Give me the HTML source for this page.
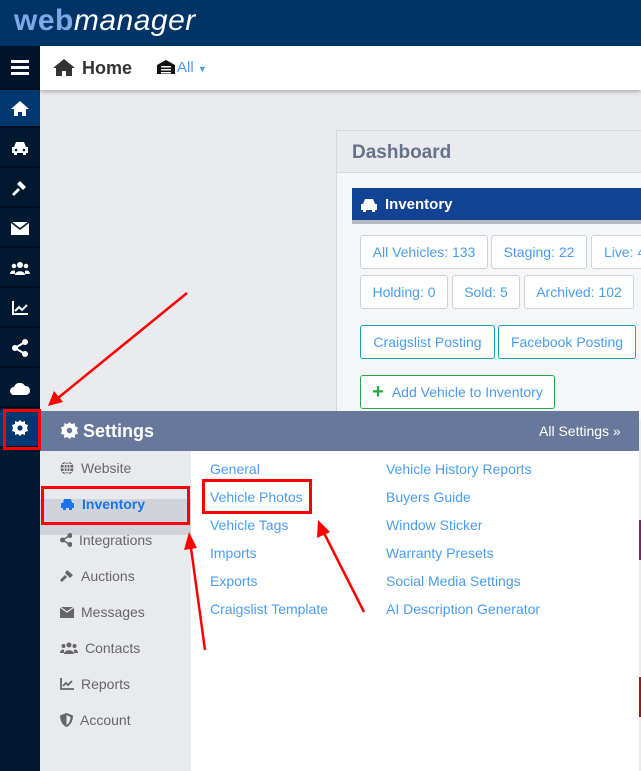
<!DOCTYPE html>
<html><head><style>
*{margin:0;padding:0;box-sizing:border-box}
body{width:641px;height:771px;overflow:hidden;background:#e9ebee;font-family:"Liberation Sans",sans-serif;position:relative}
.abs{position:absolute}
.top{left:0;top:0;width:641px;height:46px;background:#003366}
.logo{left:14px;top:4px;font-size:30px;color:#fff;font-style:italic;letter-spacing:0.5px}
.logo b{color:#7fa8e8;font-style:normal}
.side{left:0;top:46px;width:40px;height:725px;background:#001830}
.nav{left:40px;top:46px;width:601px;height:44px;background:#fff;box-shadow:0 2px 4px rgba(0,0,0,.25)}
.si{position:absolute;left:0;width:40px;height:38px;border-bottom:2px solid #000d1a;display:flex;align-items:center;justify-content:center}
.dash{left:336px;top:130px;width:305px;height:290px;background:#f5f6f8;border-left:1px solid #d5d8dc;border-top:1px solid #d5d8dc}
.btn{position:absolute;height:34px;border:1px solid #cfd3d8;border-radius:3px;background:#fff;color:#4a9cf0;font-size:14px;display:flex;align-items:center;justify-content:center;white-space:nowrap;overflow:hidden}
.panel{left:40px;top:411px;width:599px;height:360px;background:#fff}
.ph{position:absolute;left:0;top:0;width:599px;height:40px;background:#67789a;color:#fff}
.lc{position:absolute;left:0;top:40px;width:151px;height:320px;background:#e8eaed}
.li{position:absolute;left:20px;font-size:14px;color:#666;display:flex;align-items:center;gap:7px}
.lk{position:absolute;font-size:14px;color:#4a9cf0}
</style></head><body>
<div class="abs top"></div>
<div class="abs logo"><b>web</b>manager</div>
<div class="abs side">
 <div class="si" style="top:0;height:44px;background:#00152b"><svg width="18" height="16"><rect y="1" width="18" height="3" fill="#fff"/><rect y="7" width="18" height="3" fill="#fff"/><rect y="13" width="18" height="3" fill="#fff"/></svg></div>
 <div class="si" style="top:44px;background:#00386f"><svg width="18" height="16" viewBox="0 0 18 16"><path d="M9 1L0 9h3v7h4v-4h4v4h4V9h3z" fill="#fff"/></svg></div>
 <div class="si" style="top:84px"><svg width="18" height="14"><path d="M3 6L5 1h8l2 5h2v6h-2v2h-3v-2H6v2H3v-2H1V6z" fill="#fff"/><circle cx="5" cy="9" r="1.3" fill="#001830"/><circle cx="13" cy="9" r="1.3" fill="#001830"/></svg></div>
 <div class="si" style="top:124px"><svg width="16" height="16"><path d="M8 1l6 6-3 3-6-6zM6 8l2 2-6 6-2-2z" fill="#fff"/></svg></div>
 <div class="si" style="top:164px"><svg width="18" height="13"><rect width="18" height="13" fill="#fff"/><path d="M0 0l9 7 9-7" stroke="#001830" stroke-width="1.5" fill="none"/></svg></div>
 <div class="si" style="top:204px"><svg width="20" height="14"><circle cx="10" cy="4" r="3" fill="#fff"/><circle cx="4" cy="5" r="2.3" fill="#fff"/><circle cx="16" cy="5" r="2.3" fill="#fff"/><path d="M5 14c0-5 10-5 10 0zM0 13c0-4 5-4 5-3v3zM20 13c0-4-5-4-5-3v3z" fill="#fff"/></svg></div>
 <div class="si" style="top:244px"><svg width="16" height="14"><path d="M1 0v13h15" stroke="#fff" stroke-width="2" fill="none"/><path d="M3 10l4-4 3 3 5-5" stroke="#fff" stroke-width="2" fill="none"/></svg></div>
 <div class="si" style="top:284px"><svg width="16" height="18"><circle cx="13" cy="3" r="3" fill="#fff"/><circle cx="3" cy="9" r="3" fill="#fff"/><circle cx="13" cy="15" r="3" fill="#fff"/><path d="M13 3L3 9l10 6" stroke="#fff" stroke-width="2" fill="none"/></svg></div>
 <div class="si" style="top:324px"><svg width="20" height="14"><path d="M4 14a4 4 0 010-8 6 6 0 0111-1 4.5 4.5 0 011 9z" fill="#fff"/></svg></div>
 <div class="si" style="top:364px;background:#00386f"><svg width="16" height="16" viewBox="0 0 16 16"><path d="M8 0l2 2 3-1 0 3 3 1-1 3 1 3-3 1 0 3-3-1-2 2-2-2-3 1 0-3-3-1 1-3-1-3 3-1 0-3 3 1z" fill="#fff"/><circle cx="8" cy="8" r="2.6" fill="#00386f"/></svg></div>
</div>
<div class="abs nav">
 <svg class="abs" style="left:13px;top:12px" width="22" height="18" viewBox="0 0 22 18"><path d="M11 1L0 10h3v8h6v-5h4v5h6v-8h3z" fill="#333"/></svg>
 <div class="abs" style="left:42px;top:12px;font-size:18px;font-weight:bold;color:#333">Home</div>
 <svg class="abs" style="left:117px;top:14px" width="18" height="14"><path d="M0 14V5l9-5 9 5v9z" fill="#111"/><rect x="4" y="6" width="10" height="1.5" fill="#fff"/><rect x="4" y="9" width="10" height="1.5" fill="#fff"/><rect x="4" y="12" width="10" height="1.5" fill="#fff"/></svg>
 <div class="abs" style="left:137px;top:13px;font-size:15px;color:#4a9cf0">All <span style="font-size:9px">▼</span></div>
</div>
<div class="abs dash">
 <div class="abs" style="left:0;top:0;width:305px;height:42px;background:#e9ebee;border-bottom:1px solid #d5d8dc"></div>
 <div class="abs" style="left:15px;top:11px;font-size:19px;font-weight:bold;color:#66728a">Dashboard</div>
 <div class="abs" style="left:15px;top:57px;width:290px;height:36px;background:#124294;border-bottom:4px solid #b4b9c0"></div>
 <svg class="abs" style="left:23px;top:67px" width="18" height="14"><path d="M3 6L5 1h8l2 5h2v6h-2v2h-3v-2H6v2H3v-2H1V6z" fill="#fff"/></svg>
 <div class="abs" style="left:48px;top:65px;font-size:15px;font-weight:bold;color:#fff">Inventory</div>
 <div class="btn" style="left:23px;top:104px;width:128px">All Vehicles: 133</div>
 <div class="btn" style="left:154px;top:104px;width:96px">Staging: 22</div>
 <div class="btn" style="left:254px;top:104px;width:60px;justify-content:flex-start;padding-left:12px">Live: 4</div>
 <div class="btn" style="left:23px;top:144px;width:88px">Holding: 0</div>
 <div class="btn" style="left:115px;top:144px;width:68px">Sold: 5</div>
 <div class="btn" style="left:187px;top:144px;width:110px">Archived: 102</div>
 <div class="btn" style="left:23px;top:194px;width:135px;border-color:#17a2b8">Craigslist Posting</div>
 <div class="btn" style="left:161px;top:194px;width:138px;border-color:#17a2b8">Facebook Posting</div>
 <div class="btn" style="left:23px;top:244px;width:195px;border-color:#28a745"><span style="color:#28a745;font-size:20px;font-weight:bold;margin-right:8px">+</span>Add Vehicle to Inventory</div>
</div>
<div class="abs" style="left:639px;top:520px;width:2px;height:40px;background:#8b1a7a"></div>
<div class="abs" style="left:639px;top:677px;width:2px;height:40px;background:#b01010"></div>
<div class="abs panel">
 <div class="ph">
  <svg class="abs" style="left:21px;top:11px" width="17" height="17" viewBox="0 0 16 16"><path d="M8 0l2 2 3-1 0 3 3 1-1 3 1 3-3 1 0 3-3-1-2 2-2-2-3 1 0-3-3-1 1-3-1-3 3-1 0-3 3 1z" fill="#fff"/><circle cx="8" cy="8" r="2.6" fill="#67789a"/></svg>
  <div class="abs" style="left:43px;top:10px;font-size:18px;font-weight:bold">Settings</div>
  <div class="abs" style="left:499px;top:12px;font-size:14px">All Settings »</div>
 </div>
 <div class="lc">
  <div class="abs" style="left:0;top:48px;width:151px;height:36px;background:#d0d4da"></div>
  <div class="li" style="top:9px"><svg width="14" height="14" viewBox="0 0 14 14"><circle cx="7" cy="7" r="6.5" fill="#666"/><path d="M0.5 7h13M7 0.5v13M2 3.5h10M2 10.5h10" stroke="#e8eaed" stroke-width="1"/><ellipse cx="7" cy="7" rx="3" ry="6.5" fill="none" stroke="#e8eaed" stroke-width="1"/></svg>Website</div>
  <div class="li" style="top:45px;color:#1a73e8;font-weight:bold"><svg width="15" height="12"><path d="M3 5L4 1h7l1 4h2v5h-2v2H9v-2H6v2H3v-2H1V5z" fill="#1a73e8"/></svg>Inventory</div>
  <div class="li" style="top:81px"><svg width="12" height="14"><circle cx="10" cy="2.5" r="2.5" fill="#666"/><circle cx="2.5" cy="7" r="2.5" fill="#666"/><circle cx="10" cy="11.5" r="2.5" fill="#666"/><path d="M10 2.5L2.5 7 10 11.5" stroke="#666" stroke-width="1.6" fill="none"/></svg>Integrations</div>
  <div class="li" style="top:117px"><svg width="14" height="14"><path d="M7 1l6 5-3 3-5-5zM5 6l2 2-5 5-2-2z" fill="#666"/></svg>Auctions</div>
  <div class="li" style="top:153px"><svg width="14" height="11"><rect width="14" height="11" fill="#666"/><path d="M0 0l7 5 7-5" stroke="#e8eaed" stroke-width="1.2" fill="none"/></svg>Messages</div>
  <div class="li" style="top:189px"><svg width="18" height="12"><circle cx="9" cy="3" r="2.5" fill="#666"/><circle cx="3.5" cy="4" r="2" fill="#666"/><circle cx="14.5" cy="4" r="2" fill="#666"/><path d="M4 12c0-5 10-5 10 0zM0 11c0-4 4-4 4-3v3zM18 11c0-4-4-4-4-3v3z" fill="#666"/></svg> Contacts</div>
  <div class="li" style="top:225px"><svg width="14" height="12"><path d="M1 0v11h13" stroke="#666" stroke-width="1.8" fill="none"/><path d="M3 8l3-3 2 2 4-4" stroke="#666" stroke-width="1.8" fill="none"/></svg>Reports</div>
  <div class="li" style="top:261px"><svg width="13" height="14"><path d="M6.5 0L13 2.5c0 6-3 10-6.5 11.5C3 12.5 0 8.5 0 2.5z" fill="#666"/><path d="M6.5 2v10c2-1 4-4 4-8z" fill="#e8eaed"/></svg>Account</div>
 </div>
 <div class="lk" style="left:170px;top:50px">General</div>
 <div class="lk" style="left:170px;top:78px">Vehicle Photos</div>
 <div class="lk" style="left:170px;top:106px">Vehicle Tags</div>
 <div class="lk" style="left:170px;top:134px">Imports</div>
 <div class="lk" style="left:170px;top:162px">Exports</div>
 <div class="lk" style="left:170px;top:190px">Craigslist Template</div>
 <div class="lk" style="left:346px;top:50px">Vehicle History Reports</div>
 <div class="lk" style="left:346px;top:78px">Buyers Guide</div>
 <div class="lk" style="left:346px;top:106px">Window Sticker</div>
 <div class="lk" style="left:346px;top:134px">Warranty Presets</div>
 <div class="lk" style="left:346px;top:162px">Social Media Settings</div>
 <div class="lk" style="left:346px;top:190px">AI Description Generator</div>
</div>
<svg class="abs" style="left:0;top:0" width="641" height="771">
 <g fill="none" stroke="#f00" stroke-width="3">
  <rect x="4.5" y="410.5" width="35" height="38"/>
  <rect x="42.5" y="487.5" width="146" height="36"/>
  <rect x="203.5" y="480.5" width="107" height="32"/>
 </g>
 <g stroke="#f00" stroke-width="2.5">
  <line x1="187" y1="293" x2="58" y2="398"/>
  <line x1="205" y1="650" x2="191" y2="548"/>
  <line x1="364" y1="612" x2="324" y2="533"/>
 </g>
 <g fill="#f00">
  <polygon points="48,406 54,391 63,402"/>
  <polygon points="189,532 184,550 197,548"/>
  <polygon points="318,520 317,538 330,532"/>
 </g>
</svg>
</body></html>
